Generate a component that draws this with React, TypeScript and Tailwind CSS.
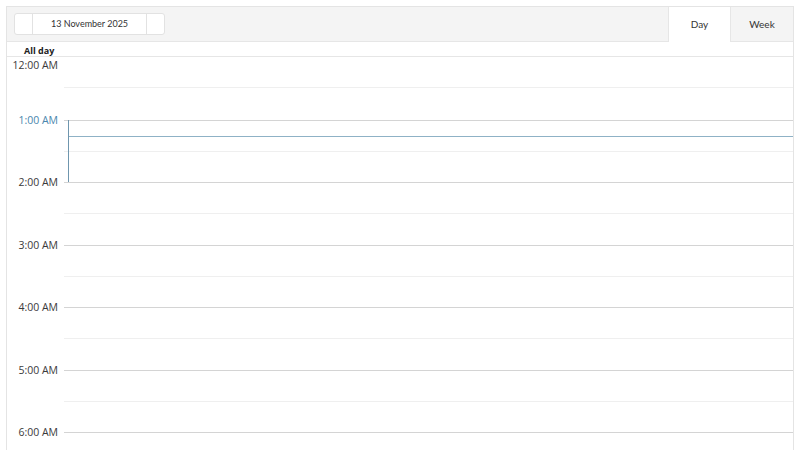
import React from "react";

const hours = ["12:00 AM", "1:00 AM", "2:00 AM", "3:00 AM", "4:00 AM", "5:00 AM", "6:00 AM"];

export default function App() {
  return (
    <div className="w-[800px] h-[450px] overflow-hidden bg-white pl-[6px] pt-[6px] pr-[6px]" style={{ fontFamily: '"Open Sans", "Noto Sans", sans-serif' }}>
      <div className="w-[788px] border border-[#e4e4e4] border-b-0 h-[460px]">
        {/* Toolbar */}
        <div className="h-[35px] bg-[#f4f4f4] border-b border-[#e6e6e6] flex justify-between">
          <div className="pl-[7px] pt-[6px]">
            <div className="flex h-[22px] bg-white border border-[#e2e2e2] rounded-[3px]">
              <div className="w-[18px] border-r border-[#e2e2e2]" />
              <div className="w-[113px] flex items-center justify-center text-[9px] text-[#333]" style={{ fontFamily: 'Lato, sans-serif' }}>13 November 2025</div>
              <div className="w-[18px] border-l border-[#e2e2e2]" />
            </div>
          </div>
          <div className="flex" style={{ fontFamily: 'Lato, sans-serif' }}>
            <div className="w-[62px] bg-white border-l border-[#e6e6e6] flex items-center justify-center text-[10px] text-[#333] -mb-px">Day</div>
            <div className="w-[63px] border-l border-[#e6e6e6] flex items-center justify-center text-[10px] text-[#333]">Week</div>
          </div>
        </div>
        {/* All day */}
        <div className="h-[15px] border-b border-[#e6e6e6] flex items-center pl-[17px] pt-[2px]">
          <span className="text-[9px] font-bold text-[#222] leading-none" style={{ fontFamily: '"Open Sans", sans-serif' }}>All day</span>
        </div>
        {/* Grid */}
        <div>
          {hours.map((h, i) => (
            <div key={h} className="flex h-[62.5px]">
              <div className="w-[57px] relative shrink-0">
                <span
                  className={`absolute right-[6px] text-[10.5px] whitespace-nowrap ${i === 0 ? "top-[1px]" : "top-[-7px] bg-white"} ${i === 1 ? "text-[#4a86ad]" : "text-[#3a3a3a]"}`}
                >
                  {h}
                </span>
              </div>
              <div className={`flex-1 relative ${i === 0 ? "" : "border-t border-[#d4d4d4]"}`}>
                <div className="h-[31px] border-b border-[#efefef]" />
                {i === 1 && (
                  <>
                    <div className="absolute left-[4px] top-[-1px] h-[63px] w-px bg-[#6f96ae]" />
                    <div className="absolute left-[5px] right-0 top-[15px] h-px bg-[#8fb2c6]" />
                  </>
                )}
              </div>
            </div>
          ))}
        </div>
      </div>
    </div>
  );
}
